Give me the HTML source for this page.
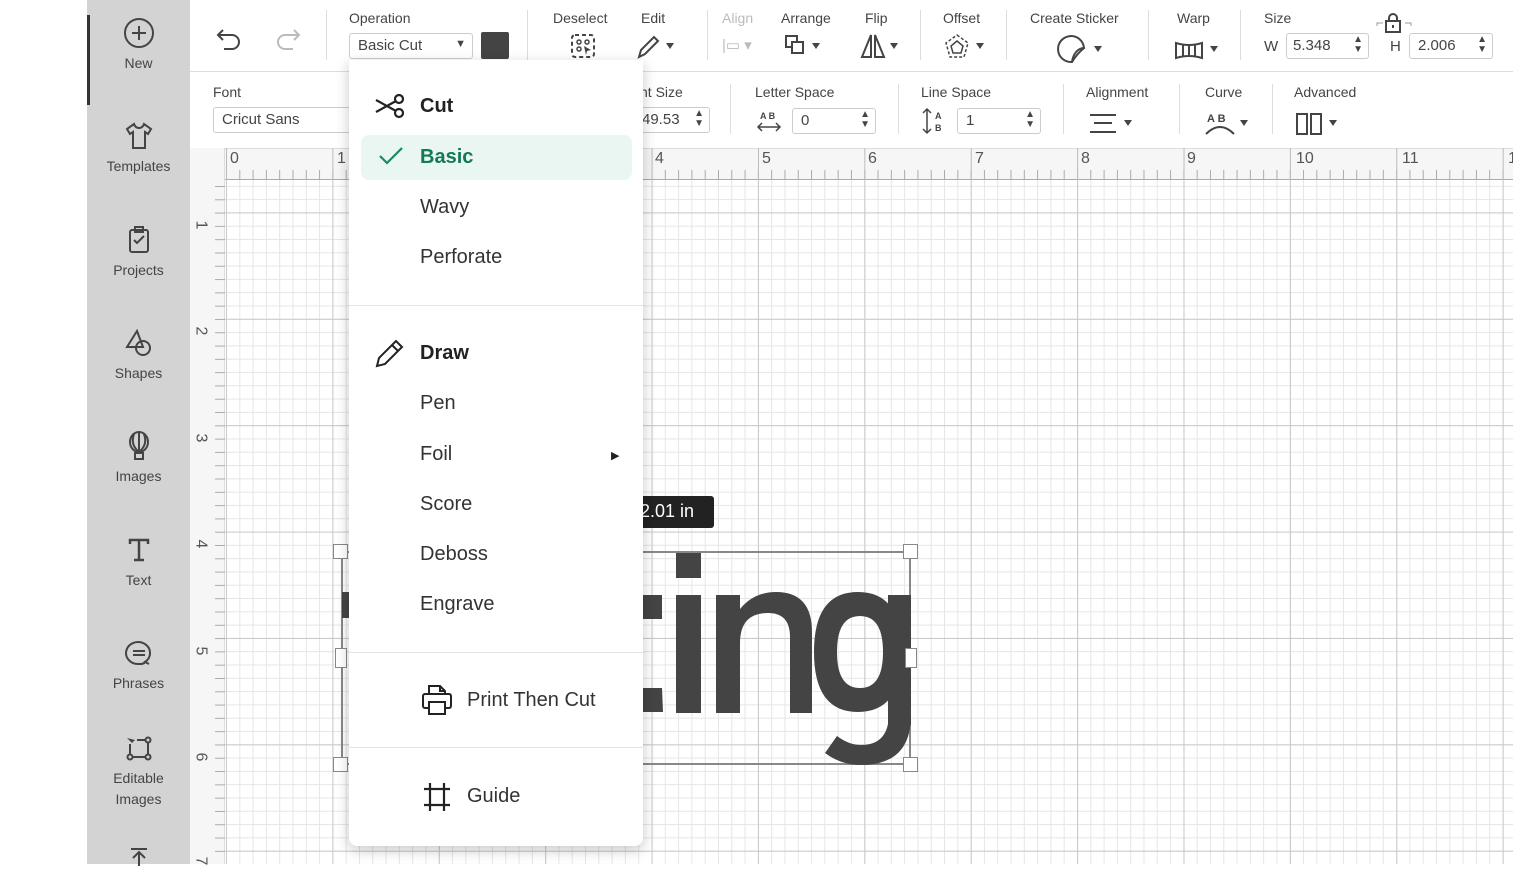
<!DOCTYPE html>
<html><head><meta charset="utf-8">
<style>
*{box-sizing:border-box;margin:0;padding:0}
body{width:1536px;height:864px;overflow:hidden;background:#fff;font-family:"Liberation Sans",sans-serif;color:#333;position:relative}
.abs{position:absolute}
#side{left:87px;top:0;width:103px;height:864px;background:#d3d3d3}
.si{position:absolute;left:0;width:103px;text-align:center;font-size:14px;color:#444}
.si svg{display:block;margin:0 auto 6px}
#grid{left:225px;top:180px;width:1288px;height:684px;background-color:#fff;
background-image:
linear-gradient(to right,#c9c9c9 1px,transparent 1px),
linear-gradient(to bottom,#c9c9c9 1px,transparent 1px),
linear-gradient(to right,#e6e6e6 1px,transparent 1px),
linear-gradient(to bottom,#e6e6e6 1px,transparent 1px);
background-size:106.4px 106.4px,106.4px 106.4px,13.3px 13.3px,13.3px 13.3px;
background-position:1px 0,0 32.4px,1px 0,0 32.4px}
#rtop{left:190px;top:148px;width:1323px;height:32px;background:#f6f6f6;border-top:1px solid #ddd}
#rleft{left:190px;top:148px;width:35px;height:716px;background:#f6f6f6;border-right:1px solid #ddd}
.rl{position:absolute;font-size:16px;color:#555}
.lbl{position:absolute;font-size:14px;color:#444}
.inp{position:absolute;border:1px solid #ccc;border-radius:3px;background:#fff;font-size:15px;color:#444;padding:4px 8px}
.sep{position:absolute;width:1px;background:#ddd}
#menu{left:349px;top:60px;width:294px;height:786px;background:#fff;border-radius:0 0 8px 8px;box-shadow:0 4px 14px rgba(0,0,0,.22)}
.mi{position:absolute;left:71px;font-size:20px;color:#333}
.hr{position:absolute;left:0;width:294px;height:1px;background:#e4e4e4}
</style></head><body>
<div class="abs" style="left:0;top:0;width:87px;height:864px;background:#fff"></div>
<div class="abs" id="side">
 <div class="abs" style="left:0;top:15px;width:3px;height:90px;background:#333"></div>
 <div class="si" style="top:17px"><svg width="32" height="32" viewBox="0 0 32 32"><circle cx="16" cy="16" r="14" fill="none" stroke="#444" stroke-width="2"/><path d="M16 9v14M9 16h14" stroke="#444" stroke-width="2"/></svg>New</div>
 <div class="si" style="top:120px"><svg width="32" height="32" viewBox="0 0 32 32"><path d="M11 4l-7 5 3 5 3-2v16h12V12l3 2 3-5-7-5c-1 3-3 4-5 4s-4-1-5-4z" fill="none" stroke="#444" stroke-width="2"/></svg>Templates</div>
 <div class="si" style="top:224px"><svg width="32" height="32" viewBox="0 0 32 32"><rect x="7" y="6" width="18" height="22" rx="2" fill="none" stroke="#444" stroke-width="2"/><rect x="12" y="3" width="8" height="5" fill="none" stroke="#444" stroke-width="2"/><path d="M11 16l3 3 7-7" fill="none" stroke="#444" stroke-width="2"/></svg>Projects</div>
 <div class="si" style="top:327px"><svg width="32" height="32" viewBox="0 0 32 32"><path d="M14 4L4 20h16z" fill="none" stroke="#444" stroke-width="2"/><circle cx="20" cy="21" r="7" fill="none" stroke="#444" stroke-width="2"/></svg>Shapes</div>
 <div class="si" style="top:430px"><svg width="32" height="32" viewBox="0 0 32 32"><ellipse cx="16" cy="12" rx="9" ry="10" fill="none" stroke="#444" stroke-width="2"/><path d="M16 2v20M11 4c-3 8 0 14 5 18M21 4c3 8 0 14-5 18M12 23h8v6h-8z" fill="none" stroke="#444" stroke-width="2"/></svg>Images</div>
 <div class="si" style="top:534px"><svg width="32" height="32" viewBox="0 0 32 32"><path d="M7 10V6h18v4M16 6v20M11 26h10" fill="none" stroke="#444" stroke-width="2.5"/></svg>Text</div>
 <div class="si" style="top:637px"><svg width="32" height="32" viewBox="0 0 32 32"><path d="M22 25a12 11 0 1 0-6 2c3 0 5 0 6-2l4 2z" fill="none" stroke="#444" stroke-width="2"/><path d="M10 14h12M10 18h12" stroke="#444" stroke-width="2"/></svg>Phrases</div>
 <div class="si" style="top:732px"><svg width="32" height="32" viewBox="0 0 32 32"><path d="M4 6l8 2-3 3z" fill="#444"/><circle cx="25" cy="8" r="2.5" fill="none" stroke="#444" stroke-width="2"/><circle cx="7" cy="25" r="2.5" fill="none" stroke="#444" stroke-width="2"/><circle cx="25" cy="25" r="2.5" fill="none" stroke="#444" stroke-width="2"/><path d="M9 25h14M25 10v13M7 12v11M14 8h9" stroke="#444" stroke-width="2"/></svg>Editable<br><span style="line-height:26px">Images</span></div>
 <div class="si" style="top:846px"><svg width="32" height="20" viewBox="0 0 32 20"><path d="M8 3h16M16 6v14M10 12l6-6 6 6" fill="none" stroke="#444" stroke-width="2"/></svg></div>
</div>

<div class="abs" style="left:190px;top:71px;width:1323px;height:1px;background:#ddd"></div>
<svg class="abs" style="left:215px;top:26px" width="30" height="26" viewBox="0 0 30 26"><path d="M8 4L3 9l5 5M3 9h14a7 7 0 0 1 0 14H9" fill="none" stroke="#444" stroke-width="2"/></svg>
<svg class="abs" style="left:272px;top:26px" width="30" height="26" viewBox="0 0 30 26"><path d="M22 4l5 5-5 5M27 9H13a7 7 0 0 0 0 14h8" fill="none" stroke="#bbb" stroke-width="2"/></svg>
<div class="sep" style="left:326px;top:10px;height:50px"></div>
<div class="lbl" style="left:349px;top:10px">Operation</div>
<div class="inp" style="left:349px;top:33px;width:124px;height:26px;padding:3px 8px">Basic Cut<span style="position:absolute;right:6px;top:4px;font-size:11px">▼</span></div>
<div class="abs" style="left:481px;top:32px;width:28px;height:27px;background:#444;border-radius:2px"></div>
<div class="sep" style="left:527px;top:10px;height:50px"></div>
<div class="lbl" style="left:553px;top:10px">Deselect</div>
<svg class="abs" style="left:569px;top:33px" width="28" height="26" viewBox="0 0 28 26"><rect x="3" y="2" width="22" height="22" rx="3" fill="none" stroke="#444" stroke-width="2" stroke-dasharray="4 3"/><circle cx="10" cy="9" r="2" fill="none" stroke="#444" stroke-width="1.5"/><circle cx="18" cy="9" r="2" fill="none" stroke="#444" stroke-width="1.5"/><circle cx="10" cy="16" r="2" fill="none" stroke="#444" stroke-width="1.5"/><path d="M15 13l7 4-4 1-1 4z" fill="#444"/></svg>
<div class="lbl" style="left:641px;top:10px">Edit</div>
<svg class="abs" style="left:636px;top:33px" width="40" height="26" viewBox="0 0 40 26"><path d="M3 24l2-7L18 4l4 4L9 21z" fill="none" stroke="#444" stroke-width="2"/><path d="M30 10h8l-4 6z" fill="#444"/></svg>
<div class="sep" style="left:707px;top:10px;height:50px"></div>
<div class="lbl" style="left:722px;top:10px;color:#bbb">Align</div>
<div class="abs" style="left:722px;top:36px;font-size:15px;color:#bbb">|▭ ▾</div>
<div class="lbl" style="left:781px;top:10px">Arrange</div>
<svg class="abs" style="left:784px;top:34px" width="40" height="24" viewBox="0 0 40 24"><rect x="2" y="2" width="11" height="11" fill="none" stroke="#444" stroke-width="2"/><rect x="8" y="8" width="11" height="11" fill="#fff" stroke="#444" stroke-width="2"/><path d="M28 9h8l-4 6z" fill="#444"/></svg>
<div class="lbl" style="left:865px;top:10px">Flip</div>
<svg class="abs" style="left:860px;top:33px" width="40" height="26" viewBox="0 0 40 26"><path d="M11 2L2 24h9zM15 2l9 22h-9z" fill="none" stroke="#444" stroke-width="2"/><path d="M30 10h8l-4 6z" fill="#444"/></svg>
<div class="sep" style="left:920px;top:10px;height:50px"></div>
<div class="lbl" style="left:943px;top:10px">Offset</div>
<svg class="abs" style="left:944px;top:33px" width="42" height="28" viewBox="0 0 42 28"><path d="M13 2l11 8-4 14H6L2 10z" fill="none" stroke="#444" stroke-width="1.5" stroke-dasharray="3 2"/><path d="M13 8l6 5-2 7H9l-2-7z" fill="none" stroke="#444" stroke-width="1.5"/><path d="M32 10h8l-4 6z" fill="#444"/></svg>
<div class="sep" style="left:1006px;top:10px;height:50px"></div>
<div class="lbl" style="left:1030px;top:10px">Create Sticker</div>
<svg class="abs" style="left:1056px;top:34px" width="48" height="32" viewBox="0 0 48 32"><path d="M16 28A13 13 0 1 1 28 14C22 14 17 20 16 28z" fill="none" stroke="#444" stroke-width="2"/><path d="M16 28c3-5 6-9 12-14" fill="none" stroke="#444" stroke-width="2"/><path d="M38 12h8l-4 6z" fill="#444"/></svg>
<div class="sep" style="left:1148px;top:10px;height:50px"></div>
<div class="lbl" style="left:1177px;top:10px">Warp</div>
<svg class="abs" style="left:1174px;top:40px" width="48" height="20" viewBox="0 0 48 20"><path d="M2 3q13 4 26 0v15q-13-4-26 0z M9 5v12M15 5v12M21 5v12" fill="none" stroke="#444" stroke-width="2"/><path d="M36 6h8l-4 6z" fill="#444"/></svg>
<div class="sep" style="left:1240px;top:10px;height:50px"></div>
<div class="lbl" style="left:1264px;top:10px">Size</div>
<div class="lbl" style="left:1264px;top:38px;font-size:15px">W</div>
<div class="inp" style="left:1286px;top:33px;width:83px;height:26px;padding:3px 6px">5.348<span style="position:absolute;right:5px;top:1px;font-size:10px;line-height:10px">▲<br>▼</span></div>
<svg class="abs" style="left:1375px;top:12px" width="38" height="22" viewBox="0 0 38 22"><path d="M2 14V11h6M36 14V11h-6" fill="none" stroke="#999" stroke-width="1"/><rect x="11" y="9" width="14" height="11" fill="none" stroke="#444" stroke-width="2"/><path d="M14 9V6a4 4 0 0 1 8 0v3" fill="none" stroke="#444" stroke-width="2"/><path d="M18 13v3" stroke="#444" stroke-width="2"/></svg>
<div class="lbl" style="left:1390px;top:38px;font-size:15px">H</div>
<div class="inp" style="left:1409px;top:33px;width:84px;height:26px;padding:3px 8px">2.006<span style="position:absolute;right:5px;top:1px;font-size:10px;line-height:10px">▲<br>▼</span></div>

<div class="lbl" style="left:213px;top:84px">Font</div>
<div class="inp" style="left:213px;top:107px;width:140px;height:26px;padding:3px 8px">Cricut Sans</div>
<div class="lbl" style="left:640px;top:84px">nt Size</div>
<div class="inp" style="left:630px;top:107px;width:80px;height:26px;padding:3px 12px;border-left:none">49.53<span style="position:absolute;right:5px;top:1px;font-size:10px;line-height:10px">▲<br>▼</span></div>
<div class="sep" style="left:730px;top:84px;height:50px"></div>
<div class="lbl" style="left:755px;top:84px">Letter Space</div>
<svg class="abs" style="left:756px;top:110px" width="28" height="24" viewBox="0 0 28 24"><text x="4" y="9" font-size="9" font-family="Liberation Sans" font-weight="bold" fill="#444">A B</text><path d="M2 17h22M6 13l-4 4 4 4M20 13l4 4-4 4" fill="none" stroke="#444" stroke-width="1.5"/></svg>
<div class="inp" style="left:792px;top:108px;width:84px;height:26px;padding:3px 8px">0<span style="position:absolute;right:5px;top:1px;font-size:10px;line-height:10px">▲<br>▼</span></div>
<div class="sep" style="left:898px;top:84px;height:50px"></div>
<div class="lbl" style="left:921px;top:84px">Line Space</div>
<svg class="abs" style="left:921px;top:107px" width="26" height="28" viewBox="0 0 26 28"><path d="M6 2v24M2 6l4-4 4 4M2 22l4 4 4-4" fill="none" stroke="#444" stroke-width="1.5"/><text x="14" y="12" font-size="9" font-weight="bold" font-family="Liberation Sans" fill="#444">A</text><text x="14" y="24" font-size="9" font-weight="bold" font-family="Liberation Sans" fill="#444">B</text></svg>
<div class="inp" style="left:957px;top:108px;width:84px;height:26px;padding:3px 8px">1<span style="position:absolute;right:5px;top:1px;font-size:10px;line-height:10px">▲<br>▼</span></div>
<div class="sep" style="left:1063px;top:84px;height:50px"></div>
<div class="lbl" style="left:1086px;top:84px">Alignment</div>
<svg class="abs" style="left:1088px;top:112px" width="48" height="24" viewBox="0 0 48 24"><path d="M2 3h26M6 11h18M2 20h26" stroke="#444" stroke-width="2"/><path d="M36 8h8l-4 6z" fill="#444"/></svg>
<div class="sep" style="left:1179px;top:84px;height:50px"></div>
<div class="lbl" style="left:1205px;top:84px">Curve</div>
<svg class="abs" style="left:1204px;top:110px" width="48" height="26" viewBox="0 0 48 26"><text x="3" y="12" font-size="11" font-weight="bold" font-family="Liberation Sans" fill="#444">A B</text><path d="M2 24q14-14 28 0" fill="none" stroke="#444" stroke-width="2"/><path d="M36 10h8l-4 6z" fill="#444"/></svg>
<div class="sep" style="left:1272px;top:84px;height:50px"></div>
<div class="lbl" style="left:1294px;top:84px">Advanced</div>
<svg class="abs" style="left:1295px;top:112px" width="46" height="24" viewBox="0 0 46 24"><rect x="2" y="2" width="10" height="20" fill="none" stroke="#444" stroke-width="2"/><rect x="16" y="2" width="10" height="20" fill="none" stroke="#444" stroke-width="2"/><path d="M34 8h8l-4 6z" fill="#444"/></svg>

<div class="abs" id="grid"></div>
<div class="abs" id="rtop"></div>
<div class="abs" id="rleft"></div>
<div class="abs" style="left:225px;top:179px;width:1288px;height:1px;background:#aaa"></div>
<div class="rl" style="left:230px;top:150px">0</div><div class="rl" style="left:337px;top:150px">1</div>
<div class="rl" style="left:655px;top:150px">4</div><div class="rl" style="left:762px;top:150px">5</div><div class="rl" style="left:868px;top:150px">6</div><div class="rl" style="left:975px;top:150px">7</div><div class="rl" style="left:1081px;top:150px">8</div><div class="rl" style="left:1187px;top:150px">9</div><div class="rl" style="left:1296px;top:150px">10</div><div class="rl" style="left:1402px;top:150px">11</div><div class="rl" style="left:1508px;top:150px">1</div>
<div class="abs" style="left:1513px;top:148px;width:23px;height:716px;background:#fff"></div>
<div class="rl" style="left:196px;top:216px;transform:rotate(90deg)">1</div>
<div class="rl" style="left:196px;top:322px;transform:rotate(90deg)">2</div>
<div class="rl" style="left:196px;top:429px;transform:rotate(90deg)">3</div>
<div class="rl" style="left:196px;top:535px;transform:rotate(90deg)">4</div>
<div class="rl" style="left:196px;top:642px;transform:rotate(90deg)">5</div>
<div class="rl" style="left:196px;top:748px;transform:rotate(90deg)">6</div>
<div class="rl" style="left:196px;top:852px;transform:rotate(90deg)">7</div>
<div class="abs" style="left:225px;top:170px;width:1288px;height:10px;background-image:linear-gradient(to right,#aaa 1px,transparent 1px);background-size:13.3px 10px;background-position:1px 0"></div>
<div class="abs" style="left:225px;top:148px;width:1288px;height:32px;background-image:linear-gradient(to right,#bbb 1px,transparent 1px);background-size:106.4px 32px;background-position:1px 0"></div>
<div class="abs" style="left:215px;top:180px;width:10px;height:684px;background-image:linear-gradient(to bottom,#aaa 1px,transparent 1px);background-size:10px 13.3px;background-position:0 6px"></div>

<!-- text object -->
<div class="abs" style="left:341px;top:551px;width:570px;height:214px;border:2px solid #888"></div>
<div class="abs" style="left:342px;top:592px;width:7px;height:26px;background:#444"></div>
<div class="abs" style="left:630px;top:496px;width:84px;height:32px;background:#222;border-radius:3px;color:#fff;font-size:18px;padding:5px 0 0 10px">2.01 in</div>
<svg class="abs" style="left:0;top:0" width="1536" height="864" viewBox="0 0 1536 864">
<g fill="#444">
<path d="M643 595h19v24h-19z"/>
<path d="M643 688h19l1 24h-20z"/>
<rect x="676" y="553" width="25" height="25"/>
<rect x="676" y="595" width="25" height="118"/>
<path d="M716 595h24v14q14-17 36-17q36 0 36 40v81h-22v-76q0-24-22-24q-28 0-28 30v70h-24z"/>
<path fill-rule="evenodd" d="M858 592q-44 0-44 60q0 60 44 60q44 0 44-60q0-60-44-60zM860 616q-23 0-23 36q0 36 23 36q23 0 23-36q0-36-23-36z"/>
<rect x="888" y="595" width="23" height="130"/>
<path d="M911 715q0 50-50 50q-20 0-36-12l12-17q12 9 24 9q28 0 28-32z"/>
</g>
</svg>
<div class="abs" style="left:333px;top:544px;width:15px;height:15px;border:1px solid #888;background:#fff"></div>
<div class="abs" style="left:903px;top:544px;width:15px;height:15px;border:1px solid #888;background:#fff"></div>
<div class="abs" style="left:333px;top:757px;width:15px;height:15px;border:1px solid #888;background:#fff"></div>
<div class="abs" style="left:903px;top:757px;width:15px;height:15px;border:1px solid #888;background:#fff"></div>
<div class="abs" style="left:335px;top:648px;width:12px;height:20px;border:1px solid #888;background:#fff"></div>
<div class="abs" style="left:905px;top:648px;width:12px;height:20px;border:1px solid #888;background:#fff"></div>

<div class="abs" id="menu">
 <svg class="abs" style="left:25px;top:33px" width="32" height="26" viewBox="0 0 32 26"><circle cx="25" cy="6" r="4" fill="none" stroke="#222" stroke-width="2.2"/><circle cx="25" cy="20" r="4" fill="none" stroke="#222" stroke-width="2.2"/><path d="M22 8L2 19M22 18L2 7" stroke="#222" stroke-width="2.2"/></svg>
 <div class="mi" style="top:35px;font-weight:bold;color:#222">Cut</div>
 <div class="abs" style="left:12px;top:75px;width:271px;height:45px;background:#eaf6f1;border-radius:8px"></div>
 <svg class="abs" style="left:29px;top:86px" width="26" height="20" viewBox="0 0 26 20"><path d="M2 10l7 7L24 2" fill="none" stroke="#1a8a5e" stroke-width="2.2"/></svg>
 <div class="mi" style="top:86px;color:#137a54;font-weight:bold">Basic</div>
 <div class="mi" style="top:136px">Wavy</div>
 <div class="mi" style="top:186px">Perforate</div>
 <div class="hr" style="top:245px"></div>
 <svg class="abs" style="left:25px;top:277px" width="32" height="32" viewBox="0 0 32 32"><path d="M3 29l2-8L22 4l6 6-17 17z M18 8l6 6" fill="none" stroke="#222" stroke-width="2"/></svg>
 <div class="mi" style="top:282px;font-weight:bold;color:#222">Draw</div>
 <div class="mi" style="top:332px">Pen</div>
 <div class="mi" style="top:383px">Foil</div>
 <div class="abs" style="left:262px;top:389px;font-size:11px;color:#222">▶</div>
 <div class="mi" style="top:433px">Score</div>
 <div class="mi" style="top:483px">Deboss</div>
 <div class="mi" style="top:533px">Engrave</div>
 <div class="hr" style="top:592px"></div>
 <svg class="abs" style="left:71px;top:624px" width="34" height="32" viewBox="0 0 34 32"><path d="M9 10V2h11l5 5v3M20 2v5h5" fill="none" stroke="#222" stroke-width="2"/><rect x="3" y="10" width="28" height="14" rx="2" fill="none" stroke="#222" stroke-width="2"/><rect x="9" y="18" width="16" height="12" fill="#fff" stroke="#222" stroke-width="2"/></svg>
 <div class="mi" style="left:118px;top:629px">Print Then Cut</div>
 <div class="hr" style="top:687px"></div>
 <svg class="abs" style="left:74px;top:722px" width="28" height="30" viewBox="0 0 28 30"><path d="M7 1v28M21 1v28M1 7h26M1 23h26" stroke="#222" stroke-width="2.2"/></svg>
 <div class="mi" style="left:118px;top:725px">Guide</div>
</div>
</body></html>
